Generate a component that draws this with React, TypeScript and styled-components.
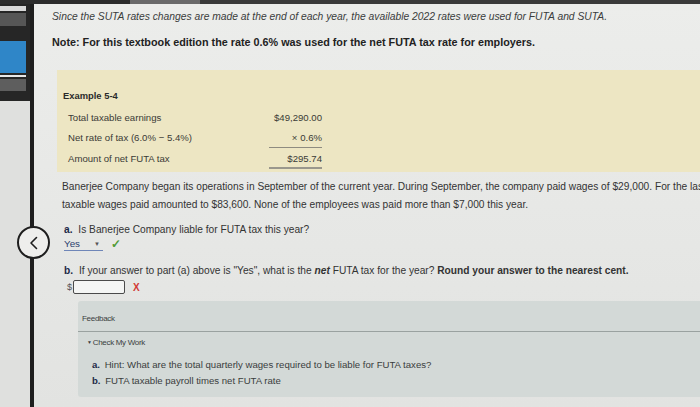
import React from "react";
import styled, { createGlobalStyle } from "styled-components";

const GlobalStyle = createGlobalStyle`
  html, body {
    margin: 0;
    padding: 0;
    background: #e7e8e6;
    overflow: hidden;
  }
  body {
    font-family: "Liberation Sans", Arial, sans-serif;
    color: #2f3131;
  }
`;

const Page = styled.div`
  width: 700px;
  height: 407px;
  display: flex;
  flex-direction: column;
  overflow: hidden;
  position: relative;
`;

const TopStrip = styled.div`
  height: 4px;
  flex: none;
  background: linear-gradient(90deg, #2c2c2c 0 130px, #6a6a6a 130px 200px, #3a3a3a 200px);
`;

const Body = styled.div`
  flex: 1;
  display: flex;
  min-height: 0;
`;

const Sidebar = styled.aside`
  width: 30px;
  flex: none;
  background: #dfe0de;
  display: flex;
  flex-direction: column;
`;

const SideNav = styled.div`
  height: 96px;
  background: #262626;
  padding: 1px 4px 0 0;
  display: flex;
  flex-direction: column;
  gap: 2px;
`;

const NavBlock = styled.div<{ $h: number; $c: string; $mt?: number }>`
  height: ${({ $h }) => $h}px;
  margin-top: ${({ $mt }) => $mt ?? 0}px;
  background: ${({ $c }) => $c};
`;

const Content = styled.main`
  flex: 1;
  min-width: 0;
  border-left: 4px solid #1e1e1e;
  padding: 6px 0 0 18px;
  background: linear-gradient(180deg, #ecedeb 0%, #e6e7e5 60%, #e2e3e1 100%);
`;

const Intro = styled.p`
  margin: 0;
  font-size: 10.3px;
  line-height: 14px;
  font-style: italic;
  color: #3a3c3c;
  white-space: nowrap;
`;

const Note = styled.p`
  margin: 11px 0 0;
  font-size: 10.8px;
  line-height: 14px;
  font-weight: 700;
  color: #222;
  white-space: nowrap;
`;

const ExampleBox = styled.section`
  margin: 21px 0 0 5px;
  height: 102px;
  box-sizing: border-box;
  padding: 19px 0 0 6px;
  background: #ede6c3;
`;

const ExampleTitle = styled.div`
  font-size: 9.4px;
  line-height: 14px;
  font-weight: 700;
  color: #2a2a2a;
  margin-bottom: 5px;
`;

const ExampleGrid = styled.div`
  display: grid;
  grid-template-columns: 201px 53px;
  padding-left: 5px;
  font-size: 9.6px;
  color: #3a3a36;
`;

const Cell = styled.div<{ $num?: boolean; $rule?: "single" | "double" }>`
  height: 20px;
  line-height: 20px;
  text-align: ${({ $num }) => ($num ? "right" : "left")};
  box-sizing: border-box;
  white-space: nowrap;
  border-bottom: ${({ $rule }) =>
    $rule === "single"
      ? "1px solid #8e8b80"
      : $rule === "double"
      ? "2px solid #9a978c"
      : "none"};
  margin-bottom: ${({ $rule }) => ($rule === "single" ? "1px" : "0")};
`;

const Paragraph = styled.p`
  margin: 6px 0 0 10px;
  font-size: 10.2px;
  line-height: 18px;
  color: #333;

  span {
    display: block;
    white-space: nowrap;
  }
`;

const Question = styled.div<{ $mt: number }>`
  margin: ${({ $mt }) => $mt}px 0 0 12px;
  font-size: 10.2px;
  line-height: 14px;
  color: #333;
  white-space: nowrap;

  b.label {
    color: #1d2a48;
    margin-right: 3px;
  }
`;

const AnswerRow = styled.div<{ $mt: number; $ml: number }>`
  display: flex;
  align-items: center;
  height: 14px;
  margin: ${({ $mt }) => $mt}px 0 0 ${({ $ml }) => $ml}px;
  font-size: 9.8px;
`;

const SelectLike = styled.div`
  width: 39px;
  height: 13px;
  box-sizing: border-box;
  display: flex;
  align-items: center;
  justify-content: space-between;
  border-bottom: 1.5px solid #6f86b8;
  color: #2b3f6e;
  padding-right: 3px;

  i {
    font-style: normal;
    font-size: 6px;
    color: #555;
  }
`;

const Check = styled.span`
  color: #4f9a34;
  font-size: 12px;
  font-weight: 700;
  margin-left: 8px;
`;

const Dollar = styled.span`
  color: #555;
  font-size: 9px;
  margin-right: 1px;
`;

const Input = styled.div`
  width: 52px;
  height: 14px;
  box-sizing: border-box;
  border: 1px solid #4a4a4a;
  border-radius: 2px;
  background: #f4f5f4;
`;

const Cross = styled.span`
  color: #d23a36;
  font-size: 10px;
  font-weight: 700;
  margin-left: 8px;
`;

const Feedback = styled.section`
  margin: 7px 0 0 26px;
  height: 96px;
  box-sizing: border-box;
  background: #d3d9d7;
  border-radius: 3px 0 0 3px;
  padding-top: 12px;
`;

const FeedbackTitle = styled.div`
  font-size: 8px;
  line-height: 12px;
  letter-spacing: -0.3px;
  color: #3b3f3f;
  padding: 0 0 6px 4px;
  border-bottom: 1px solid #9aa2a0;
`;

const Toggle = styled.div`
  font-size: 8px;
  line-height: 12px;
  letter-spacing: -0.3px;
  color: #3b3f3f;
  padding: 4px 0 0 9px;

  i {
    font-style: normal;
    font-size: 5px;
    vertical-align: 1px;
    margin-right: 1px;
  }
`;

const HintList = styled.div`
  padding: 8px 0 0 14px;
  font-size: 9.6px;
  line-height: 16px;
  color: #3a3d3d;
  white-space: nowrap;

  b {
    color: #1d2a48;
    margin-right: 2px;
  }
`;

const BackButton = styled.button`
  position: absolute;
  left: 17px;
  top: 226px;
  width: 33px;
  height: 33px;
  border-radius: 50%;
  border: 2px solid #1e1e1e;
  background: #eeeeec;
  padding: 0;
  display: flex;
  align-items: center;
  justify-content: center;
`;

export default function App() {
  return (
    <>
      <GlobalStyle />
      <Page>
        <TopStrip />
        <Body>
          <Sidebar>
            <SideNav>
              <NavBlock $h={5} $c="#d9d9d9" $mt={1} />
              <NavBlock $h={13} $c="#565656" />
              <NavBlock $h={32} $c="#2f86c8" $mt={13} />
              <NavBlock $h={2} $c="#e8e8e8" />
              <NavBlock $h={12} $c="#5e5e5e" />
            </SideNav>
          </Sidebar>
          <Content>
            <Intro>
              Since the SUTA rates changes are made at the end of each year, the available 2022
              rates were used for FUTA and SUTA.
            </Intro>
            <Note>
              Note: For this textbook edition the rate 0.6% was used for the net FUTA tax rate for
              employers.
            </Note>

            <ExampleBox>
              <ExampleTitle>Example 5-4</ExampleTitle>
              <ExampleGrid>
                <Cell>Total taxable earnings</Cell>
                <Cell $num>$49,290.00</Cell>
                <Cell>Net rate of tax (6.0% − 5.4%)</Cell>
                <Cell $num $rule="single">× 0.6%</Cell>
                <Cell>Amount of net FUTA tax</Cell>
                <Cell $num $rule="double">$295.74</Cell>
              </ExampleGrid>
            </ExampleBox>

            <Paragraph>
              <span>
                Banerjee Company began its operations in September of the current year. During
                September, the company paid wages of $29,000. For the last
              </span>
              <span>
                taxable wages paid amounted to $83,600. None of the employees was paid more than
                $7,000 this year.
              </span>
            </Paragraph>

            <Question $mt={9}>
              <b className="label">a.</b> Is Banerjee Company liable for FUTA tax this year?
            </Question>
            <AnswerRow $mt={0} $ml={12}>
              <SelectLike>
                Yes <i>▼</i>
              </SelectLike>
              <Check>✓</Check>
            </AnswerRow>

            <Question $mt={13}>
              <b className="label">b.</b> If your answer to part (a) above is "Yes", what is the{" "}
              <b>
                <i>net</i>
              </b>{" "}
              FUTA tax for the year? <b>Round your answer to the nearest cent.</b>
            </Question>
            <AnswerRow $mt={2} $ml={15}>
              <Dollar>$</Dollar>
              <Input />
              <Cross>X</Cross>
            </AnswerRow>

            <Feedback>
              <FeedbackTitle>Feedback</FeedbackTitle>
              <Toggle>
                <i>▼</i>Check My Work
              </Toggle>
              <HintList>
                <div>
                  <b>a.</b> Hint: What are the total quarterly wages required to be liable for FUTA
                  taxes?
                </div>
                <div>
                  <b>b.</b> FUTA taxable payroll times net FUTA rate
                </div>
              </HintList>
            </Feedback>
          </Content>
        </Body>
        <BackButton aria-label="Back">
          <svg width="16" height="16" viewBox="0 0 16 16">
            <path
              d="M10.5 2.5 L5 8 L10.5 13.5"
              fill="none"
              stroke="#1e1e1e"
              strokeWidth="1.6"
              strokeLinecap="round"
              strokeLinejoin="round"
            />
          </svg>
        </BackButton>
      </Page>
    </>
  );
}
